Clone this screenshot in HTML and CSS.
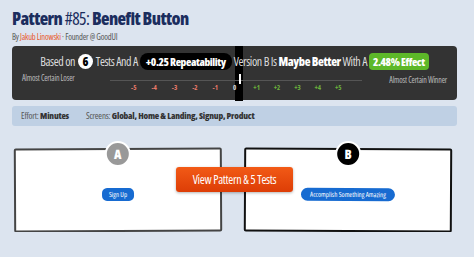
FILE: index.html
```html
<!DOCTYPE html>
<html lang="en">
<head>
    <meta charset="UTF-8">
    <title>Pattern #85: Benefit Button</title>
    <link rel="stylesheet" href="styles.css">
</head>
<body>
    <div class="header">
        <h1><b>Pattern</b> #85: <b>Benefit Button</b></h1>
        <p class="byline">By <a href="#">Jakub Linowski</a> · Founder @ GoodUI</p>
    </div>

    <div class="score">
        <div class="marker"></div>
        <div class="summary">
            Based on <span class="dot">6</span> Tests And A <span class="pill">+0.25 Repeatability</span>
            Version B Is <b>Maybe Better</b> With A <span class="pill green">2.48% Effect</span>
        </div>
        <div class="scale">
            <span class="end">Almost Certain Loser</span>
            <div class="axis">
                <div class="line"><span class="tick"></span></div>
                <div class="nums">
                    <span class="neg">-5</span><span class="neg">-4</span><span class="neg">-3</span><span class="neg">-2</span><span class="neg">-1</span>
                    <span class="zero">0</span>
                    <span class="pos">+1</span><span class="pos">+2</span><span class="pos">+3</span><span class="pos">+4</span><span class="pos">+5</span>
                </div>
            </div>
            <span class="end right">Almost Certain Winner</span>
        </div>
    </div>

    <div class="meta">
        <span>Effort: <b>Minutes</b></span>
        <span>Screens: <b>Global, Home &amp; Landing, Signup, Product</b></span>
    </div>

    <div class="versions">
        <div class="version a">
            <span class="label">A</span>
            <span class="cta">Sign Up</span>
        </div>
        <div class="version b">
            <span class="label">B</span>
            <span class="cta">Accomplish Something Amazing</span>
        </div>
        <a class="view" href="#">View Pattern &amp; 5 Tests</a>
    </div>
</body>
</html>
```

FILE: styles.css
```css
body { margin: 0; background-color: #dce4ef; font-family: "Open Sans", "Liberation Sans", sans-serif; font-stretch: 75%; color: #333; }
.header { padding: 6px 12px 0; }
h1 { margin: 0; font-size: 17.5px; line-height: 24px; color: #1b2d5e; font-weight: normal; letter-spacing: -0.6px; white-space: nowrap; }
h1 b { font-weight: 800; }
.byline { margin: 1px 0 0; font-size: 8.5px; line-height: 12px; color: #555; letter-spacing: -0.2px; }
.byline a { color: #e8552a; text-decoration: none; }

.score { position: relative; margin: 3px 17px 0 12px; height: 54px; background-color: #333; border-radius: 4px; color: #ddd; }
.marker { position: absolute; left: 223px; top: 0; width: 8px; height: 55px; background: #000; }
.summary { position: relative; padding-top: 7px; text-align: center; font-size: 12px; line-height: 16px; letter-spacing: -0.4px; white-space: nowrap; }
.summary b { color: #fff; font-weight: 800; }
.dot { display: inline-block; width: 15px; height: 15px; border-radius: 50%; background: #fff; color: #000; font-weight: 800; line-height: 15px; margin: 0 1px; letter-spacing: 0; }
.pill { display: inline-block; padding: 0 6px; border-radius: 8px; background: #000; color: #fff; font-weight: 800; font-size: 11px; line-height: 17px; }
.pill.green { background: #5db829; border-radius: 4px; padding: 0 4px; }
.scale { position: relative; display: flex; align-items: flex-start; padding: 3px 10px 0 10px; }
.end { width: 80px; font-size: 8px; line-height: 10px; color: #bbb; letter-spacing: -0.2px; white-space: nowrap; }
.end.right { text-align: right; padding-top: 2px; }
.axis { flex: 1; }
.line { position: relative; height: 1px; margin: 7px 5px 0 8px; background: #555; }
.tick { position: absolute; left: 129px; top: -6px; width: 2px; height: 10px; background: #fff; }
.nums { display: flex; padding: 2px 0 0 29px; font-size: 7px; line-height: 10px; font-weight: bold; }
.nums span { width: 20.4px; }
.neg { color: #e87a6a; }
.zero { color: #ddd; }
.pos { color: #6cb13c; }

.meta { display: flex; gap: 17px; margin: 6px 17px 0 12px; padding: 5px 9px; background: #bfd0e4; border-radius: 3px; font-size: 9px; line-height: 10px; color: #555; letter-spacing: -0.2px; }
.meta b { color: #333; font-weight: 800; }

.versions { position: relative; display: flex; gap: 22px; margin: 22px 0 0 14px; }
.version { position: relative; width: 204px; height: 80px; background: #fff; border: 2px solid #444; border-radius: 2px; display: flex; justify-content: center; align-items: center; }
.version.a { transform: rotate(-0.3deg); }
.version.b { border-color: #111; transform: rotate(0.3deg); }
.label { position: absolute; top: -9px; left: 50%; margin-left: -13px; width: 22px; height: 22px; border: 2px solid #fff; border-radius: 50%; background: #999; color: #fff; font-weight: 800; font-size: 13px; line-height: 22px; text-align: center; }
.b .label { background: #000; }
.cta { margin-top: 9px; padding: 0 7px; border-radius: 5px; background: #176bd1; color: #fff; font-size: 7px; line-height: 13px; white-space: nowrap; }
.b .cta { border-radius: 7px; padding: 0 9px; }
.view { position: absolute; left: 162px; top: 19px; width: 117px; height: 25px; line-height: 25px; text-align: center; border-radius: 3px; background: linear-gradient(#f25a16, #dd3d06); color: #fff; font-size: 12px; letter-spacing: -0.3px; white-space: nowrap; text-decoration: none; box-shadow: 0 1px 3px rgba(0,0,0,0.3); }
```
